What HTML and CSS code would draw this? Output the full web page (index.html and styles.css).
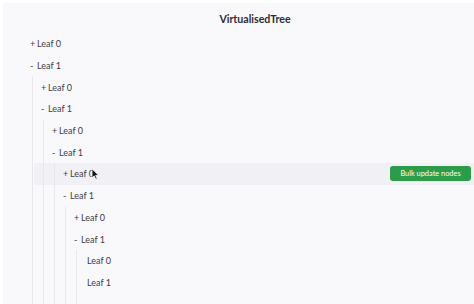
FILE: index.html
```html
<!DOCTYPE html>
<html>
<head>
<meta charset="utf-8">
<link rel="stylesheet" href="styles.css">
</head>
<body>
<div class="page">
  <h1 class="title">VirtualisedTree</h1>
  <div class="tree">
    <div class="row"><span class="pfx">+</span>Leaf 0</div>
    <div class="row"><span class="pfx">-</span>Leaf 1</div>
    <div class="group">
      <div class="row"><span class="pfx">+</span>Leaf 0</div>
      <div class="row"><span class="pfx">-</span>Leaf 1</div>
      <div class="group">
        <div class="row"><span class="pfx">+</span>Leaf 0</div>
        <div class="row"><span class="pfx">-</span>Leaf 1</div>
        <div class="group">
          <div class="row row--hover"><span class="label"><span class="pfx">+</span>Leaf 0</span><button class="bulk">Bulk update nodes</button>
            <svg class="cursor" width="9" height="12" viewBox="0 0 9 12"><path d="M1 0.8 L1 10 L3.2 7.9 L4.8 11.3 L6.2 10.7 L4.7 7.4 L7.6 7.3 Z" fill="#111" stroke="#fff" stroke-width="0.8"/></svg>
          </div>
          <div class="row"><span class="pfx">-</span>Leaf 1</div>
          <div class="group">
            <div class="row"><span class="pfx">+</span>Leaf 0</div>
            <div class="row"><span class="pfx">-</span>Leaf 1</div>
            <div class="group">
              <div class="row row--leaf">Leaf 0</div>
              <div class="row row--leaf">Leaf 1</div>
              <div class="spacer"></div>
            </div>
          </div>
        </div>
      </div>
    </div>
  </div>
</div>
</body>
</html>
```

FILE: styles.css
```css
html, body {
  margin: 0;
  padding: 0;
  background: #ffffff;
  height: 100%;
  overflow: hidden;
}
.page {
  margin: 3px 0 0 3px;
  height: 320px;
  background: #f9f9fc;
  font-family: Lato, "Open Sans", sans-serif;
  color: #3d3d47;
}
.title {
  margin: 0;
  padding: 6px 0 0 33px;
  line-height: 20px;
  font-size: 10.6px;
  font-weight: 700;
  color: #2c2c36;
  text-align: center;
}
.tree {
  margin-top: 4px;
  padding-left: 27px;
  isolation: isolate;
}
.row {
  position: relative;
  height: 21.7px;
  display: flex;
  align-items: center;
  font-size: 9px;
  white-space: nowrap;
}
.row--leaf {
  padding-left: 2px;
}
.spacer {
  height: 30px;
}
.pfx {
  display: inline-block;
  width: 7px;
}
.group {
  margin-left: 2px;
  border-left: 1px solid #e7e7ec;
  padding-left: 8px;
}
.row--hover {
  justify-content: space-between;
}
.row--hover::before {
  content: "";
  position: absolute;
  left: -29px;
  right: 0;
  top: 0;
  bottom: 0;
  background: #f1f1f5;
  z-index: -1;
}
.label {
  display: flex;
  align-items: center;
}
.bulk {
  width: 81px;
  height: 15px;
  margin-right: 3px;
  padding: 0;
  border: none;
  border-radius: 3px;
  background: #2a9c4a;
  color: #ffffff;
  font-family: Lato, "Open Sans", sans-serif;
  font-size: 7.4px;
  line-height: 15px;
  text-align: center;
}
.cursor {
  position: absolute;
  left: 28px;
  top: 5px;
}
```
